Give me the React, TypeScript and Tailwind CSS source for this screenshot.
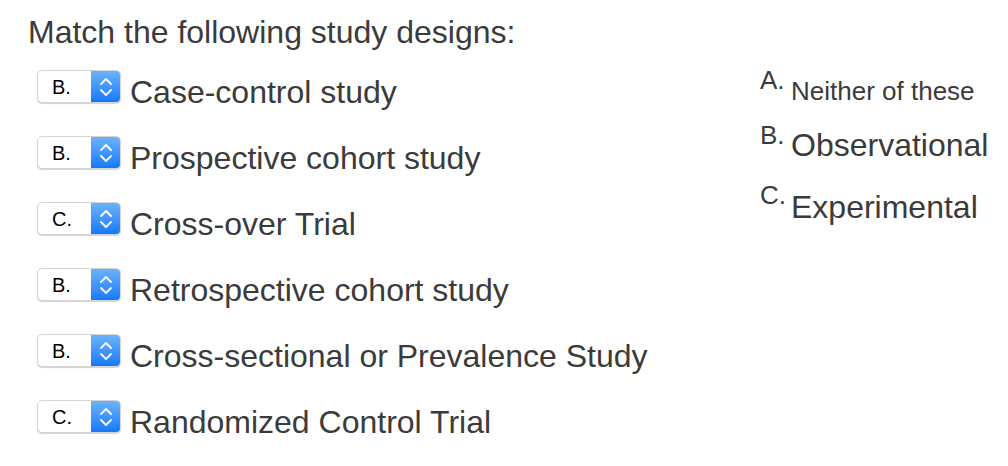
import React from 'react';

const rows = [
  { pick: 'B.', label: 'Case-control study' },
  { pick: 'B.', label: 'Prospective cohort study' },
  { pick: 'C.', label: 'Cross-over Trial' },
  { pick: 'B.', label: 'Retrospective cohort study' },
  { pick: 'B.', label: 'Cross-sectional or Prevalence Study' },
  { pick: 'C.', label: 'Randomized Control Trial' },
];

function Stepper() {
  return (
    <svg width="14" height="22" viewBox="0 0 14 22" fill="none">
      <path d="M2 8 L7 3 L12 8" stroke="white" strokeWidth="1.8" strokeLinecap="round" strokeLinejoin="round" />
      <path d="M2 14 L7 19 L12 14" stroke="white" strokeWidth="1.8" strokeLinecap="round" strokeLinejoin="round" />
    </svg>
  );
}

function FakeSelect({ value }: { value: string }) {
  return (
    <div className="flex h-[33px] w-[84px] shrink-0 overflow-hidden rounded-[5px] border border-[#d4d4d4] bg-white shadow-[0_1px_1px_rgba(0,0,0,0.18)]">
      <div className="flex flex-1 items-center pl-[14px] text-[20px] leading-none text-black">{value}</div>
      <div className="flex w-[29px] items-center justify-center bg-gradient-to-b from-[#6ab2fb] to-[#1079fa]">
        <Stepper />
      </div>
    </div>
  );
}

export default function App() {
  return (
    <div
      className="h-[466px] w-[1008px] bg-white pl-[28px] pt-[16px] text-[#3b3b3b]"
      style={{ fontFamily: '"Liberation Sans", Arial, sans-serif' }}
    >
      <h1 className="text-[32px] leading-none">Match the following study designs:</h1>

      <div className="mt-[22px] flex">
        {/* left: the matches */}
        <div className="ml-[9px] w-[723px] shrink-0">
          {rows.map((r, i) => (
            <div key={i} className="flex h-[66px] items-start">
              <FakeSelect value={r.pick} />
              <span className="ml-[9px] mt-[6px] text-[32px] leading-none">{r.label}</span>
            </div>
          ))}
        </div>

        {/* right: the choices */}
        <div className="-mt-[3px] shrink-0">
          <div className="flex h-[55px] items-start">
            <span className="w-[31px] text-[26px] leading-none">A.</span>
            <span className="mt-[11px] text-[26px] leading-none">Neither of these</span>
          </div>
          <div className="flex h-[60px] items-start">
            <span className="w-[31px] text-[26px] leading-none">B.</span>
            <span className="mt-[7px] text-[32px] leading-none">Observational</span>
          </div>
          <div className="flex items-start">
            <span className="w-[31px] text-[26px] leading-none">C.</span>
            <span className="mt-[9px] text-[32px] leading-none">Experimental</span>
          </div>
        </div>
      </div>
    </div>
  );
}
